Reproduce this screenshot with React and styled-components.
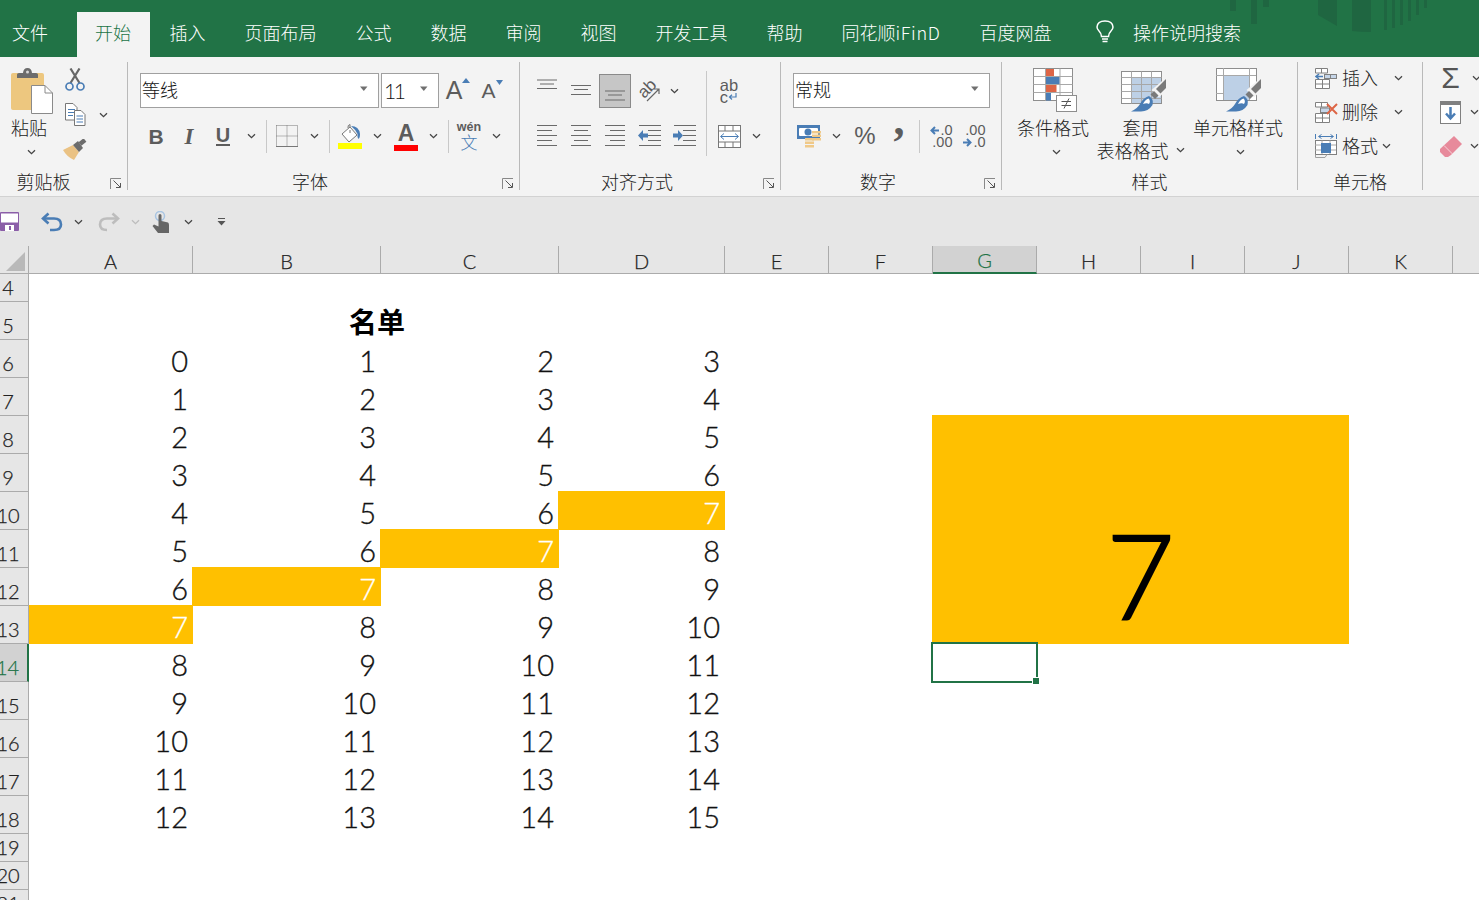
import styled, { createGlobalStyle } from 'styled-components';

const CJK = '"Noto Sans CJK SC", sans-serif';
const GREEN = '#217346';
const BLUE = '#4a7db5';
const ORANGE = '#ffc000';

const GlobalStyle = createGlobalStyle`
    html, body {
        margin: 0;
        padding: 0;
        height: 900px;
        overflow: hidden;
        background: #fff;
    }
    * { box-sizing: border-box; }
    svg { display: block; flex: none; }
`;

const Page = styled.div`
    width: 1479px;
    height: 900px;
    overflow: hidden;
    font-family: ${CJK};
    color: #222;
`;

/* title bar tabs */
const TabBar = styled.div`
    position: relative;
    display: flex;
    height: 57px;
    background: ${GREEN};
    padding-top: 12px;
`;

const Tab = styled.div`
    display: flex;
    align-items: center;
    height: 45px;
    padding: 0 19.5px 5px;
    font-size: 18px;
    font-weight: 300;
    white-space: nowrap;
    color: ${p => (p.$active ? GREEN : '#fff')};
    background: ${p => (p.$active ? '#f3f3f3' : 'transparent')};
`;

const FileTab = styled(Tab)`
    padding: 0 29px 5px 12px;
`;

const ActiveTab = styled(Tab)`
    padding: 0 19px 5px 18px;
`;

const SearchTab = styled(Tab)`
    padding: 0 0 5px 25px;
    gap: 19px;
`;

const Latin = styled.span`
    letter-spacing: .7px;
`;

const Decor = styled.svg`
    position: absolute;
    top: 0;
    right: 0;
`;

/* ribbon */
const Ribbon = styled.div`
    display: flex;
    align-items: flex-start;
    height: 140px;
    background: #f3f3f3;
    border-bottom: 1px solid #d2d2d2;
    padding-top: 5px;
    overflow: hidden;
`;

const Group = styled.div`
    position: relative;
    display: flex;
    flex-direction: column;
    flex: none;
    width: ${p => p.$w}px;
    height: 128px;
    border-right: ${p => (p.$last ? 'none' : '1px solid #b9b9b9')};
`;

const GroupBody = styled.div`
    flex: 1;
    min-height: 0;
    padding-left: ${p => p.$pl || 0}px;
    display: ${p => (p.$row ? 'flex' : 'block')};
`;

const GroupLabel = styled.div`
    height: 22px;
    line-height: 22px;
    margin-bottom: -2px;
    font-size: 18px;
    font-weight: 300;
    text-align: center;
    padding-right: ${p => p.$pr || 0}px;
    color: #222;
`;

const LauncherIcon = styled.svg`
    position: absolute;
    right: 5px;
    bottom: 1px;
`;

const ToolRow = styled.div`
    display: flex;
    align-items: center;
    height: ${p => p.$h || 36}px;
    margin-top: ${p => p.$mt || 0}px;
`;

const Tool = styled.span`
    display: inline-flex;
    align-items: center;
    justify-content: center;
    flex: none;
    width: ${p => p.$w}px;
    margin-left: ${p => p.$ml || 0}px;
`;

const ActiveTool = styled(Tool)`
    height: 34px;
    margin: 0 1px;
    background: #c6c6c6;
    border: 1px solid #8a8a8a;
`;

const Sep = styled.span`
    display: block;
    width: 1px;
    height: 33px;
    background: #c8c8c8;
`;

const Combo = styled.div`
    display: flex;
    align-items: center;
    justify-content: space-between;
    flex: none;
    width: ${p => p.$w}px;
    height: 35px;
    margin-right: ${p => p.$mr || 0}px;
    padding: 0 9px 3px 1px;
    background: #fff;
    border: 1px solid #a0a0a0;
    font-size: 18px;
    font-weight: 300;
    color: #111;
`;

const ComboNumber = styled.span`
    font-family: Lato, "Liberation Sans", sans-serif;
    font-size: 21px;
    letter-spacing: -2.5px;
    padding: 3px 0 0 1px;
`;

const Glyph = styled.span`
    font-family: "Liberation Sans", sans-serif;
    font-size: ${p => p.$size}px;
    font-weight: ${p => p.$weight || 400};
    line-height: 1;
    color: ${p => p.$color || '#5c5c5c'};
`;

const ItalicGlyph = styled(Glyph)`
    font-family: "Liberation Serif", serif;
    font-style: italic;
`;

const UnderGlyph = styled(Glyph)`
    border-bottom: 2px solid #5c5c5c;
    line-height: 17px;
`;

const CommaGlyph = styled(Glyph)`
    font-family: "Liberation Serif", serif;
    transform: translateY(-15px);
`;

const GrowBox = styled.span`
    display: inline-flex;
    align-items: flex-start;
    padding-left: 2px;
`;

const Stack = styled.span`
    display: inline-flex;
    flex-direction: column;
    align-items: center;
`;

const ColorBar = styled.span`
    display: block;
    width: 24px;
    height: 6px;
    background: ${p => p.$color};
`;

const WenTop = styled.span`
    font-family: "Liberation Sans", sans-serif;
    font-size: 12.5px;
    font-weight: 700;
    line-height: 11px;
    color: #5c5c5c;
`;

const WenBottom = styled.span`
    font-size: 17px;
    font-weight: 300;
    line-height: 17px;
    color: ${BLUE};
`;

const WrapLine = styled.span`
    display: flex;
    align-items: center;
    font-family: "Liberation Sans", sans-serif;
    font-size: 16.5px;
    line-height: 12px;
    color: #5c5c5c;
    align-self: flex-start;
`;

const DecimalLine = styled.span`
    display: flex;
    align-items: center;
    justify-content: flex-end;
    gap: 1px;
    width: 100%;
    font-family: "Liberation Sans", sans-serif;
    font-size: 14.5px;
    line-height: 12px;
    color: #5c5c5c;
`;

const DecimalStack = styled.span`
    display: flex;
    flex-direction: column;
    width: 23px;
`;

const AlignLeft = styled.div`
    flex: none;
    width: 186px;
    padding-left: 10px;
`;

const AlignDivider = styled.div`
    flex: none;
    width: 1px;
    height: 85px;
    margin-top: 9px;
    background: #c8c8c8;
`;

const OrientBox = styled.span`
    display: inline-flex;
    font-family: "Liberation Sans", sans-serif;
    font-size: 17px;
    color: #5c5c5c;
    transform: rotate(-45deg) translate(0, -3px);
`;

const OrientArrow = styled.svg`
    margin-left: -13px;
    margin-top: 9px;
`;

/* clipboard */
const PasteColumn = styled.div`
    display: flex;
    flex-direction: column;
    align-items: center;
    flex: none;
    width: 62px;
    padding-top: 6px;
`;

const SmallColumn = styled.div`
    flex: none;
`;

const SmallRow = styled.div`
    display: flex;
    align-items: center;
    height: 35px;
`;

const LargeLabel = styled.div`
    display: flex;
    align-items: center;
    justify-content: center;
    gap: ${p => p.$gap || 0}px;
    height: 23px;
    padding: 0 ${p => p.$pr || 0}px 4px 0;
    font-size: 18px;
    font-weight: 300;
    white-space: nowrap;
    color: #222;
`;

const LargeButton = styled.div`
    display: flex;
    flex-direction: column;
    align-items: center;
    flex: none;
    width: ${p => p.$w}px;
    padding-top: 6px;
`;

const LargeIcon = styled.div`
    display: flex;
    justify-content: center;
    height: 49px;
    padding-left: ${p => p.$pl || 0}px;
`;

const ChevronLine = styled.div`
    display: flex;
    align-items: center;
    justify-content: center;
    height: 23px;
    padding-left: ${p => p.$pl || 0}px;
`;

const CellsRow = styled.div`
    display: flex;
    align-items: center;
    height: 34px;
    margin-top: ${p => p.$mt || 0}px;
    font-size: 18px;
    font-weight: 300;
    color: #222;
`;

const CellsText = styled.span`
    flex: none;
    width: 36px;
    margin: 0 0 2px 5px;
    white-space: nowrap;
`;

const EditGlyph = styled.span`
    display: flex;
    justify-content: center;
    flex: none;
    width: 21px;
    font-family: "Liberation Sans", sans-serif;
    font-size: 30px;
    line-height: 1;
    color: #555;
`;

/* quick access toolbar */
const QuickBar = styled.div`
    display: flex;
    align-items: center;
    height: 49px;
    background: #e6e6e6;
`;

/* sheet */
const Sheet = styled.div`
    display: grid;
    grid-template-columns: 29px 164px 188px 178px 166px repeat(8, 104px);
    grid-template-rows: 28px 28px repeat(14, 38px) repeat(3, 28px);
    background: #fff;
`;

const Corner = styled.div`
    grid-column: 1;
    grid-row: 1;
    background: #e6e6e6;
    border-right: 1px solid #ababab;
    border-bottom: 1px solid #ababab;
    display: flex;
    align-items: flex-end;
    justify-content: flex-end;
    padding: 0 3px 2px 0;
`;

const ColHead = styled.div`
    grid-row: 1;
    grid-column: ${p => p.$col};
    display: flex;
    justify-content: center;
    align-items: flex-end;
    font-family: Lato, "Liberation Sans", sans-serif;
    font-weight: 300;
    -webkit-text-stroke: .25px currentColor;
    font-size: 20px;
    line-height: 23px;
    color: ${p => (p.$on ? GREEN : '#222')};
    background: ${p => (p.$on ? '#d2d2d2' : '#e6e6e6')};
    border-right: 1px solid #ababab;
    border-bottom: ${p => (p.$on ? `2px solid ${GREEN}` : '1px solid #ababab')};
`;

const RowHead = styled.div`
    grid-column: 1;
    grid-row: ${p => p.$row};
    display: flex;
    justify-content: center;
    align-items: flex-end;
    padding: 0 12px 3px 0;
    font-family: Lato, "Liberation Sans", sans-serif;
    font-weight: 300;
    -webkit-text-stroke: .25px currentColor;
    font-size: 20px;
    line-height: 22px;
    color: ${p => (p.$on ? GREEN : '#222')};
    background: ${p => (p.$on ? '#d2d2d2' : '#e6e6e6')};
    border-right: ${p => (p.$on ? `2px solid ${GREEN}` : '1px solid #ababab')};
    border-bottom: 1px solid #ababab;
`;

const Title = styled.div`
    grid-column: 2 / 6;
    grid-row: ${p => p.$row};
    display: flex;
    justify-content: center;
    align-items: flex-end;
    font-size: 28px;
    font-weight: 700;
    line-height: 38px;
    color: #000;
`;

const Cell = styled.div`
    grid-column: ${p => p.$col};
    grid-row: ${p => p.$row};
    display: flex;
    justify-content: flex-end;
    align-items: flex-end;
    padding: 0 5px 0 0;
    font-family: Lato, "Liberation Sans", sans-serif;
    font-weight: 300;
    -webkit-text-stroke: .35px currentColor;
    font-size: 29px;
    line-height: 34px;
    color: #111;
`;

const FillCell = styled(Cell)`
    color: #fff;
    background: ${ORANGE};
    margin: -1px 0 0 ${p => (p.$col === 2 ? 0 : -1)}px;
`;

const MergedCell = styled.div`
    grid-column: 8 / 12;
    grid-row: 6 / 12;
    margin: -1px 0 0 -1px;
    display: flex;
    justify-content: center;
    align-items: flex-end;
    background: ${ORANGE};
    font-family: Lato, "Liberation Sans", sans-serif;
    font-weight: 300;
    -webkit-text-stroke: 2px currentColor;
    font-size: 118px;
    line-height: 122px;
    padding-bottom: 8px;
    color: #000;
`;

const Selected = styled.div`
    position: relative;
    grid-column: 8;
    grid-row: 12;
    margin: -2px -1px -1px -2px;
    border: 2px solid ${GREEN};
`;

const Handle = styled.span`
    position: absolute;
    right: -3px;
    bottom: -3px;
    width: 6px;
    height: 6px;
    background: ${GREEN};
    box-shadow: -1px -1px 0 #fff;
`;

/* icons */
const Chevron = ({ color = '#444' }) => (
    <svg width="9" height="6" viewBox="0 0 9 6">
        <path d="M1 1.2 L4.5 4.6 L8 1.2" fill="none" stroke={color} strokeWidth="1.3" />
    </svg>
);

const Caret = () => (
    <svg width="10" height="6" viewBox="0 0 10 6">
        <path d="M1 .5 H8.5 L4.8 5 Z" fill="#707070" />
    </svg>
);

const Launcher = () => (
    <LauncherIcon width="12" height="11" viewBox="0 0 12 11">
        <path d="M.5 11 V.5 H11" fill="none" stroke="#888" />
        <path d="M3.5 2.5 L10 9 M10.5 5 V9.5 H6" fill="none" stroke="#555" />
    </LauncherIcon>
);

const PasteIcon = () => (
    <svg width="42" height="46" viewBox="0 0 42 46">
        <rect x="0" y="5" width="33" height="37" rx="2" fill="#edc77f" />
        <path d="M6 10 V6.5 Q6 5 8 5 H12 Q12.5 0 16.5 0 Q20.5 0 21 5 H25 Q27 5 27 6.5 V10 Z" fill="#6c6c6c" />
        <circle cx="16.5" cy="4" r="1.5" fill="#d8d8d8" />
        <path d="M20.5 17.5 H34 L41.5 25 V45.5 H20.5 Z" fill="#fff" stroke="#8a8a8a" />
        <path d="M34 17.5 V25 H41.5" fill="none" stroke="#8a8a8a" />
    </svg>
);

const CutIcon = () => (
    <svg width="20" height="23" viewBox="0 0 20 23">
        <path d="M5.5 15 L14.5 .5 M14.5 15 L5.5 .5" stroke="#666" strokeWidth="2.2" />
        <circle cx="4.5" cy="18.5" r="3.5" fill="none" stroke={BLUE} strokeWidth="1.7" />
        <circle cx="15.5" cy="18.5" r="3.5" fill="none" stroke={BLUE} strokeWidth="1.7" />
    </svg>
);

const CopyIcon = () => (
    <svg width="21" height="23" viewBox="0 0 21 23">
        <path d="M.5 .5 H8 L12 4.5 V17 H.5 Z" fill="#fff" stroke="#777" />
        <path d="M3 6.5 H10 M3 9.5 H10 M3 12.5 H8" stroke={BLUE} />
        <path d="M9.5 7.5 H16 L20 11.5 V22.5 H9.5 Z" fill="#fff" stroke="#777" />
        <path d="M11.5 13 H18 M11.5 16 H18 M11.5 19 H18" stroke={BLUE} />
    </svg>
);

const BrushIcon = () => (
    <svg width="24" height="21" viewBox="0 0 24 21">
        <path d="M0 11 L10 6 L16 13 L11 21 Q4 18 0 11 Z" fill="#eac284" />
        <path d="M10 6 L15 2 L20 9 L16 13 Z" fill="#6c6c6c" />
        <path d="M17 5 L22 1" stroke="#6c6c6c" strokeWidth="4.5" />
    </svg>
);

const BorderIcon = () => (
    <svg width="22" height="22" viewBox="0 0 22 22">
        <path d="M.5 .5 H21.5 V21.5 M.5 .5 V21 M11 .5 V21.5 M.5 11 H21.5" fill="none" stroke="#777" strokeDasharray="1 1" />
        <path d="M0 21.5 H22" stroke="#777" />
    </svg>
);

const TriUp = () => (
    <svg width="8" height="5" viewBox="0 0 8 5"><path d="M4 0 L8 5 H0 Z" fill={BLUE} /></svg>
);

const TriDown = () => (
    <svg width="7" height="5" viewBox="0 0 7 5"><path d="M0 0 H7 L3.5 5 Z" fill={BLUE} /></svg>
);

const BucketIcon = () => (
    <svg width="24" height="25" viewBox="0 0 24 25">
        <path d="M4 10 L12 3 L19 11 L11 18 Z" fill="#fff" stroke="#777" />
        <path d="M12 3 V0.5 Q9.5 1 10 4 M12 6 V9" fill="none" stroke="#777" />
        <path d="M13 2 Q21 2 22 10 Q22 14 20.5 15 Q19 13 19.5 10 Q18 6 13 2 Z" fill={BLUE} />
        <rect x="0" y="19" width="24" height="6" fill="#ffff00" />
    </svg>
);

const LineSet = ({ lines, w = 20, h = 28 }) => (
    <svg width={w} height={h} viewBox={`0 0 ${w} ${h}`}>
        {lines.map(([a, b, y], i) => (
            <path key={i} d={`M${a} ${y} H${b}`} stroke="#6a6a6a" />
        ))}
    </svg>
);

const FiveLines = ({ mode }) => {
    const inner = mode === 'left' ? [0, 15] : mode === 'center' ? [3, 17] : [5, 20];
    return (
        <LineSet
            h={22}
            lines={[
                [0, 20, 0.5],
                [...inner, 5.5],
                [0, 20, 10.5],
                [...inner, 15.5],
                [0, 20, 20.5],
            ]}
        />
    );
};

const IndentIcon = ({ right }) => (
    <svg width="23" height="22" viewBox="0 0 23 22">
        <path d="M1 .5 H23 M1 20.5 H23 M10 5.5 H23 M10 10.5 H23 M10 15.5 H23" stroke="#6a6a6a" />
        {right ? (
            <path d="M0 8.5 H5 V5 L10 10.5 L5 16 V12.5 H0 Z" fill={BLUE} />
        ) : (
            <path d="M10 8.5 H5 V5 L0 10.5 L5 16 V12.5 H10 Z" fill={BLUE} />
        )}
    </svg>
);

const MergeIcon = () => (
    <svg width="23" height="23" viewBox="0 0 23 23">
        <rect x=".5" y=".5" width="22" height="22" fill="#fff" stroke="#777" />
        <path d="M0 6 H23 M0 17 H23 M7 0 V6 M15 0 V6 M7 17 V23 M15 17 V23" stroke="#777" />
        <path d="M3 11.5 H20" stroke={BLUE} />
        <path d="M6 8.5 L2.5 11.5 L6 14.5 M17 8.5 L20.5 11.5 L17 14.5" fill="none" stroke={BLUE} />
    </svg>
);

const MoneyIcon = () => (
    <svg width="24" height="23" viewBox="0 0 24 23">
        <rect x="0" y="0" width="23" height="14" fill={BLUE} />
        <rect x="2" y="3" width="19" height="8" rx="1" fill="#fff" />
        <circle cx="11" cy="7" r="3.5" fill={BLUE} />
        <rect x="15" y="6" width="9" height="2.5" fill="#f0c988" />
        <rect x="15" y="9.5" width="9" height="2.5" fill="#f0c988" />
        <rect x="15" y="13" width="9" height="2.5" fill="#f0c988" />
        <rect x="8" y="13" width="9" height="2.5" fill="#f0c988" />
        <rect x="8" y="16.5" width="9" height="2.5" fill="#f0c988" />
        <rect x="8" y="20" width="9" height="2.5" fill="#f0c988" />
    </svg>
);

const ArrowLeft = () => (
    <svg width="9" height="9" viewBox="0 0 9 9">
        <path d="M9 4.5 H2 M5 1 L1.5 4.5 L5 8" fill="none" stroke={BLUE} strokeWidth="2" />
    </svg>
);

const ArrowRight = () => (
    <svg width="9" height="9" viewBox="0 0 9 9">
        <path d="M0 4.5 H7 M4 1 L7.5 4.5 L4 8" fill="none" stroke={BLUE} strokeWidth="2" />
    </svg>
);

const WrapArrow = () => (
    <svg width="9" height="8" viewBox="0 0 9 8">
        <path d="M8 0 V4 H2 M4 1.8 L1.5 4 L4 6.5" fill="none" stroke={BLUE} strokeWidth="1.2" />
    </svg>
);

const Grid = ({ x, y, w, h, cols, rows }) => (
    <g>
        <rect x={x} y={y} width={w} height={h} fill="#fff" stroke="#8e8e8e" />
        {cols.map(c => (
            <path key={`c${c}`} d={`M${c} ${y} V${y + h}`} stroke="#a8a8a8" />
        ))}
        {rows.map(r => (
            <path key={`r${r}`} d={`M${x} ${r} H${x + w}`} stroke="#a8a8a8" />
        ))}
    </g>
);

const PaintBrush = () => (
    <g>
        <path d="M45 11 V21 L38 28 L32 22 Z" fill="#f3f3f3" stroke="#f3f3f3" strokeWidth="2" />
        <path d="M45 11 V20 L39.5 25.5 L35 21 Z" fill="#7a7a7a" />
        <path d="M33 23 L37.5 27.5 L34 31 L29.5 26.5 Z" fill="#7a7a7a" />
        <path d="M10 43.5 Q16 41 19 36 Q22 30 28 28 Q33 31 31.5 37 Q27 44 19 43.5 Z" fill={BLUE} />
        <path d="M22 36 Q24 31.5 27.5 30.5 Q30 33 28 36 Q26 34.5 22 36 Z" fill="#fff" />
    </g>
);

const CondIcon = () => (
    <svg width="44" height="44" viewBox="0 0 44 44">
        <Grid x={.5} y={.5} w={39} h={32} cols={[12.5, 27]} rows={[8.5, 16.5, 24.5]} />
        <rect x="13" y="1" width="8" height="7" fill="#dd6546" />
        <rect x="13" y="9" width="13.5" height="7" fill={BLUE} />
        <rect x="13" y="17" width="10.5" height="7" fill="#dd6546" />
        <rect x="13" y="25" width="5" height="7.5" fill={BLUE} />
        <rect x="23.5" y="27.5" width="20" height="16" fill="#fff" stroke="#8e8e8e" />
        <path d="M28.5 33.5 H38 M28.5 37.5 H38 M36 30.5 L31 40.5" stroke="#555" />
    </svg>
);

const TableIcon = () => (
    <svg width="46" height="46" viewBox="0 0 46 46">
        <g transform="translate(0 3)">
            <Grid x={.5} y={.5} w={40} h={32} cols={[10.5, 20.5, 30.5]} rows={[6.5, 13.5, 20.5, 27.5]} />
            <rect x="11" y="7" width="29" height="25" fill="#bdd0e6" />
            <path d="M20.5 7 V32 M30.5 7 V32 M11 13.5 H40 M11 20.5 H40 M11 27.5 H40" stroke="#a7a7a7" />
        </g>
        <PaintBrush />
    </svg>
);

const CellStyleIcon = () => (
    <svg width="46" height="46" viewBox="0 0 46 46">
        <rect x=".5" y=".5" width="40" height="32" fill="#fff" stroke="#8e8e8e" />
        <path d="M7.5 0 V32 M33.5 0 V32 M0 7.5 H40 M0 25.5 H40" stroke="#a8a8a8" />
        <rect x="8" y="8" width="25" height="24" fill="#bdd0e6" />
        <PaintBrush />
    </svg>
);

const CellGrid = () => (
    <path d="M.5 12.5 H14.5 V21.5 H.5 Z M7.5 12.5 V21.5 M.5 17 H14.5 M.5 1.5 H12.5 V6 H.5 Z M6.5 1.5 V6" fill="#fff" stroke="#808080" />
);

const InsertIcon = () => (
    <svg width="22" height="22" viewBox="0 0 22 22">
        <CellGrid />
        <rect x="9.5" y="7.5" width="12" height="4" fill="#c5d5e8" stroke="#808080" />
        <path d="M15.5 7.5 V11.5" stroke="#808080" />
        <path d="M8 9.5 H1.5 M4 7 L1 9.5 L4 12" fill="none" stroke={BLUE} strokeWidth="1.5" />
    </svg>
);

const DeleteIcon = () => (
    <svg width="23" height="22" viewBox="0 0 23 22">
        <CellGrid />
        <rect x="5.5" y="7" width="9" height="4.5" fill="#c5d5e8" stroke="#808080" />
        <path d="M12 3 L22 13 M22 3 L12 13" stroke="#dd6546" strokeWidth="2" />
    </svg>
);

const FormatIcon = () => (
    <svg width="23" height="24" viewBox="0 0 23 24">
        <path d="M.5 0 V5 M21.5 0 V5" stroke={BLUE} fill="none" />
        <path d="M4 2.5 H18 M6.5 .5 L3.5 2.5 L6.5 4.5 M15.5 .5 L18.5 2.5 L15.5 4.5" fill="none" stroke={BLUE} />
        <rect x=".5" y="6.5" width="21" height="14" fill="#fff" stroke="#808080" />
        <path d="M7 6.5 V20 M15 6.5 V20 M0 11 H21 M0 16 H21" stroke="#a8a8a8" />
        <rect x="6" y="9" width="10" height="10" fill={BLUE} />
        <path d="M.5 20.5 V23.5 H10 M12 20.5 L10 23.5" fill="none" stroke="#a0a0a0" />
    </svg>
);

const FillIcon = () => (
    <svg width="21" height="23" viewBox="0 0 21 23">
        <rect x=".5" y=".5" width="20" height="22" fill="#fff" stroke="#808080" />
        <rect x="0" y="0" width="21" height="4" fill="#808080" />
        <path d="M10.5 6 V17 M6 12.5 L10.5 17.5 L15 12.5" fill="none" stroke={BLUE} strokeWidth="2.5" />
    </svg>
);

const EraserIcon = () => (
    <svg width="22" height="21" viewBox="0 0 22 21">
        <path d="M14 0 L22 8 L11 19 L8 21 L5 21 L0 16 L0 13 Z" fill="#e78a9b" />
        <path d="M4 9.5 L12.5 18" stroke="#f7d4da" />
    </svg>
);

const BulbIcon = () => (
    <svg width="18" height="24" viewBox="0 0 18 24">
        <path d="M5.5 16.5 Q5.5 13.5 3 11 Q1 9 1 7 Q1.5 1 9 1 Q16.5 1 17 7 Q17 9 15 11 Q12.5 13.5 12.5 16.5 Z" fill="none" stroke="#fff" strokeWidth="1.5" />
        <path d="M6 19 H12 M6.5 21.5 H11.5" stroke="#fff" strokeWidth="1.5" />
    </svg>
);

const SaveIcon = () => (
    <svg width="19" height="19" viewBox="0 0 19 19">
        <rect width="19" height="19" rx="1" fill="#8b5ea8" />
        <rect x="1" y="1.5" width="17" height="9" fill="#fff" />
        <rect x="5" y="13" width="9" height="6" fill="#fff" />
        <rect x="9" y="14" width="2" height="4" fill="#8b5ea8" />
    </svg>
);

const UndoIcon = ({ color }) => (
    <svg width="22" height="20" viewBox="0 0 22 20">
        <path d="M7.5 1.5 L2 6.5 L7.5 11.5" fill="none" stroke={color} strokeWidth="2.6" />
        <path d="M2.5 6.5 H13 Q20 6.5 20 12.5 Q20 18 13 18 H9" fill="none" stroke={color} strokeWidth="2.6" />
    </svg>
);

const RedoIcon = ({ color }) => (
    <svg width="22" height="20" viewBox="0 0 22 20">
        <path d="M14.5 1.5 L20 6.5 L14.5 11.5" fill="none" stroke={color} strokeWidth="2.6" />
        <path d="M19.5 6.5 H9 Q2 6.5 2 12.5 Q2 18 9 18" fill="none" stroke={color} strokeWidth="2.6" />
    </svg>
);

const TouchIcon = () => (
    <svg width="18" height="22" viewBox="0 0 18 22">
        <circle cx="8" cy="5" r="4.5" fill="none" stroke="#a9c5e2" strokeWidth="1.5" />
        <path d="M6.5 4.5 Q6.5 3 8 3 Q9.5 3 9.5 4.5 V10 L16 11.5 Q17 12 17 14 V22 H6 L0.5 15 L2 13.5 L6.5 15.5 Z" fill="#666" />
    </svg>
);

const CustomizeIcon = () => (
    <svg width="9" height="9" viewBox="0 0 9 9">
        <path d="M1 1.5 H8" stroke="#555" />
        <path d="M0.5 4 H8.5 L4.5 8.5 Z" fill="#555" />
    </svg>
);

const CornerIcon = () => (
    <svg width="19" height="19" viewBox="0 0 19 19">
        <path d="M19 0 V19 H0 Z" fill="#b9b9b9" />
    </svg>
);

const TABS = ['插入', '页面布局', '公式', '数据', '审阅', '视图', '开发工具', '帮助'];
const COLUMNS = ['A', 'B', 'C', 'D', 'E', 'F', 'G', 'H', 'I', 'J', 'K', 'L'];
const ROWS = [4, 5, 6, 7, 8, 9, 10, 11, 12, 13, 14, 15, 16, 17, 18, 19, 20, 21];
const DATA_ROWS = [6, 7, 8, 9, 10, 11, 12, 13, 14, 15, 16, 17, 18];

function ClipboardGroup() {
    return (
        <Group $w={128}>
            <GroupBody $row>
                <PasteColumn>
                    <LargeIcon $pl={2}><PasteIcon /></LargeIcon>
                    <LargeLabel $pr={4}>粘贴</LargeLabel>
                    <ChevronLine><Chevron /></ChevronLine>
                </PasteColumn>
                <SmallColumn>
                    <SmallRow><Tool $w={26}><CutIcon /></Tool></SmallRow>
                    <SmallRow>
                        <Tool $w={26}><CopyIcon /></Tool>
                        <Tool $w={30}><Chevron /></Tool>
                    </SmallRow>
                    <SmallRow><Tool $w={26}><BrushIcon /></Tool></SmallRow>
                </SmallColumn>
            </GroupBody>
            <GroupLabel $pr={40}>剪贴板</GroupLabel>
            <Launcher />
        </Group>
    );
}

function FontGroup() {
    return (
        <Group $w={392}>
            <GroupBody $pl={12}>
                <ToolRow $h={35} $mt={11}>
                    <Combo $w={239} $mr={2}>等线<Caret /></Combo>
                    <Combo $w={58}><ComboNumber>11</ComboNumber><Caret /></Combo>
                    <Tool $w={36}>
                        <GrowBox><Glyph $size={25}>A</Glyph><TriUp /></GrowBox>
                    </Tool>
                    <Tool $w={32}>
                        <GrowBox><Glyph $size={21}>A</Glyph><TriDown /></GrowBox>
                    </Tool>
                </ToolRow>
                <ToolRow $mt={10}>
                    <Tool $w={32}><Glyph $size={21} $weight={700}>B</Glyph></Tool>
                    <Tool $w={34}><ItalicGlyph $size={23} $weight={700}>I</ItalicGlyph></Tool>
                    <Tool $w={34}><UnderGlyph $size={20} $weight={700}>U</UnderGlyph></Tool>
                    <Tool $w={22}><Chevron /></Tool>
                    <Tool $w={8}><Sep /></Tool>
                    <Tool $w={34}><BorderIcon /></Tool>
                    <Tool $w={20}><Chevron /></Tool>
                    <Tool $w={10}><Sep /></Tool>
                    <Tool $w={32}><BucketIcon /></Tool>
                    <Tool $w={22}><Chevron /></Tool>
                    <Tool $w={36}>
                        <Stack><Glyph $size={23} $weight={700}>A</Glyph><ColorBar $color="#ff0000" /></Stack>
                    </Tool>
                    <Tool $w={18}><Chevron /></Tool>
                    <Tool $w={12}><Sep /></Tool>
                    <Tool $w={30}>
                        <Stack><WenTop>wén</WenTop><WenBottom>文</WenBottom></Stack>
                    </Tool>
                    <Tool $w={24}><Chevron /></Tool>
                </ToolRow>
            </GroupBody>
            <GroupLabel $pr={27}>字体</GroupLabel>
            <Launcher />
        </Group>
    );
}

function AlignGroup() {
    return (
        <Group $w={261}>
            <GroupBody $row>
                <AlignLeft>
                    <ToolRow $h={35} $mt={11}>
                        <Tool $w={34}><LineSet lines={[[0, 20, 3], [3, 17, 7], [0, 20, 11.5]]} /></Tool>
                        <Tool $w={34}><LineSet lines={[[0, 20, 8.5], [3, 17, 12.5], [0, 20, 17.5]]} /></Tool>
                        <ActiveTool $w={32}><LineSet lines={[[0, 20, 14], [3, 17, 18], [0, 20, 23]]} /></ActiveTool>
                        <Tool $w={36}>
                            <OrientBox>ab</OrientBox>
                            <OrientArrow width="14" height="14" viewBox="0 0 14 14">
                                <path d="M1 13 L13 1 M8 1 H13 V6" fill="none" stroke="#666" strokeWidth="1.2" />
                            </OrientArrow>
                        </Tool>
                        <Tool $w={12}><Chevron /></Tool>
                    </ToolRow>
                    <ToolRow $mt={10}>
                        <Tool $w={34}><FiveLines mode="left" /></Tool>
                        <Tool $w={34}><FiveLines mode="center" /></Tool>
                        <Tool $w={34}><FiveLines mode="right" /></Tool>
                        <Tool $w={35}><IndentIcon /></Tool>
                        <Tool $w={34}><IndentIcon right /></Tool>
                    </ToolRow>
                </AlignLeft>
                <AlignDivider />
                <div>
                    <ToolRow $h={35} $mt={11}>
                        <Tool $w={44}>
                            <Stack>
                                <WrapLine>ab</WrapLine>
                                <WrapLine>c<WrapArrow /></WrapLine>
                            </Stack>
                        </Tool>
                    </ToolRow>
                    <ToolRow $mt={10}>
                        <Tool $w={44}><MergeIcon /></Tool>
                        <Tool $w={10}><Chevron /></Tool>
                    </ToolRow>
                </div>
            </GroupBody>
            <GroupLabel $pr={26}>对齐方式</GroupLabel>
            <Launcher />
        </Group>
    );
}

function NumberGroup() {
    return (
        <Group $w={221}>
            <GroupBody $pl={12}>
                <ToolRow $h={35} $mt={11}>
                    <Combo $w={197}>常规<Caret /></Combo>
                </ToolRow>
                <ToolRow $mt={10}>
                    <Tool $w={32}><MoneyIcon /></Tool>
                    <Tool $w={22}><Chevron /></Tool>
                    <Tool $w={36}><Glyph $size={24}>%</Glyph></Tool>
                    <Tool $w={32}><CommaGlyph $size={44} $weight={700}>,</CommaGlyph></Tool>
                    <Tool $w={8}><Sep /></Tool>
                    <Tool $w={36}>
                        <DecimalStack>
                            <DecimalLine><ArrowLeft />.0</DecimalLine>
                            <DecimalLine>.00</DecimalLine>
                        </DecimalStack>
                    </Tool>
                    <Tool $w={30}>
                        <DecimalStack>
                            <DecimalLine>.00</DecimalLine>
                            <DecimalLine><ArrowRight />.0</DecimalLine>
                        </DecimalStack>
                    </Tool>
                </ToolRow>
            </GroupBody>
            <GroupLabel $pr={26}>数字</GroupLabel>
            <Launcher />
        </Group>
    );
}

function StylesGroup() {
    return (
        <Group $w={296}>
            <GroupBody $row $pl={11}>
                <LargeButton $w={80}>
                    <LargeIcon $pl={4}><CondIcon /></LargeIcon>
                    <LargeLabel>条件格式</LargeLabel>
                    <ChevronLine $pl={6}><Chevron /></ChevronLine>
                </LargeButton>
                <LargeButton $w={95}>
                    <LargeIcon $pl={7}><TableIcon /></LargeIcon>
                    <LargeLabel>套用</LargeLabel>
                    <LargeLabel $gap={7}>表格格式<Chevron /></LargeLabel>
                </LargeButton>
                <LargeButton $w={100}>
                    <LargeIcon $pl={2}><CellStyleIcon /></LargeIcon>
                    <LargeLabel>单元格样式</LargeLabel>
                    <ChevronLine $pl={4}><Chevron /></ChevronLine>
                </LargeButton>
            </GroupBody>
            <GroupLabel>样式</GroupLabel>
        </Group>
    );
}

function CellsGroup() {
    return (
        <Group $w={125}>
            <GroupBody $pl={17}>
                <CellsRow $mt={-1}>
                    <Tool $w={22}><InsertIcon /></Tool>
                    <CellsText>插入</CellsText>
                    <Tool $w={40}><Chevron /></Tool>
                </CellsRow>
                <CellsRow>
                    <Tool $w={22}><DeleteIcon /></Tool>
                    <CellsText>删除</CellsText>
                    <Tool $w={40}><Chevron /></Tool>
                </CellsRow>
                <CellsRow>
                    <Tool $w={22}><FormatIcon /></Tool>
                    <CellsText>格式</CellsText>
                    <Tool $w={16}><Chevron /></Tool>
                </CellsRow>
            </GroupBody>
            <GroupLabel>单元格</GroupLabel>
        </Group>
    );
}

function EditGroup() {
    return (
        <Group $w={56} $last>
            <GroupBody $pl={17}>
                <CellsRow $mt={-1}>
                    <EditGlyph>Σ</EditGlyph>
                    <Tool $w={30}><Chevron /></Tool>
                </CellsRow>
                <CellsRow>
                    <Tool $w={21}><FillIcon /></Tool>
                    <Tool $w={26}><Chevron /></Tool>
                </CellsRow>
                <CellsRow>
                    <Tool $w={22}><EraserIcon /></Tool>
                    <Tool $w={24}><Chevron /></Tool>
                </CellsRow>
            </GroupBody>
        </Group>
    );
}

function Worksheet() {
    return (
        <Sheet>
            <Corner><CornerIcon /></Corner>
            {COLUMNS.map((name, i) => (
                <ColHead key={name} $col={i + 2} $on={name === 'G'}>{name}</ColHead>
            ))}
            {ROWS.map((row, i) => (
                <RowHead key={row} $row={i + 2} $on={row === 14}>{row}</RowHead>
            ))}
            <Title $row={3}>名单</Title>
            {DATA_ROWS.map((row, r) =>
                [0, 1, 2, 3].map(c => {
                    const value = r + c;
                    const Item = value === 7 ? FillCell : Cell;
                    return (
                        <Item key={`${row}-${c}`} $col={c + 2} $row={r + 4}>{value}</Item>
                    );
                })
            )}
            <MergedCell>7</MergedCell>
            <Selected><Handle /></Selected>
        </Sheet>
    );
}

export default function App() {
    return (
        <Page>
            <GlobalStyle />
            <TabBar>
                <Decor width="259" height="40" viewBox="1220 0 259 40">
                    <path
                        d="M1230 0 H1236 V11 H1230 Z M1251 0 H1257 V24 H1251 Z M1263 0 H1269 V7 H1263 Z M1318 0 H1337 V26 L1318 15 Z M1352 0 H1371 V32 Q1360 32 1352 31 Z M1384 0 H1387 V30 H1384 Z M1392 0 H1395 V28 H1392 Z M1400 0 H1403 V25 H1400 Z M1408 0 H1411 V21 H1408 Z M1416 0 H1419 V15 H1416 Z M1424 0 H1427 V8 H1424 Z"
                        fill="#1f6641"
                    />
                </Decor>
                <FileTab>文件</FileTab>
                <ActiveTab $active>开始</ActiveTab>
                {TABS.map(name => <Tab key={name}>{name}</Tab>)}
                <Tab>同花顺<Latin>iFinD</Latin></Tab>
                <Tab>百度网盘</Tab>
                <SearchTab><BulbIcon />操作说明搜索</SearchTab>
            </TabBar>
            <Ribbon>
                <ClipboardGroup />
                <FontGroup />
                <AlignGroup />
                <NumberGroup />
                <StylesGroup />
                <CellsGroup />
                <EditGroup />
            </Ribbon>
            <QuickBar>
                <Tool $w={19}><SaveIcon /></Tool>
                <Tool $w={44} $ml={11}><UndoIcon color={BLUE} /></Tool>
                <Tool $w={8}><Chevron /></Tool>
                <Tool $w={44} $ml={5}><RedoIcon color="#bdbdbd" /></Tool>
                <Tool $w={8}><Chevron color="#bdbdbd" /></Tool>
                <Tool $w={32} $ml={6}><TouchIcon /></Tool>
                <Tool $w={8} $ml={7}><Chevron /></Tool>
                <Tool $w={10} $ml={24}><CustomizeIcon /></Tool>
            </QuickBar>
            <Worksheet />
        </Page>
    );
}
